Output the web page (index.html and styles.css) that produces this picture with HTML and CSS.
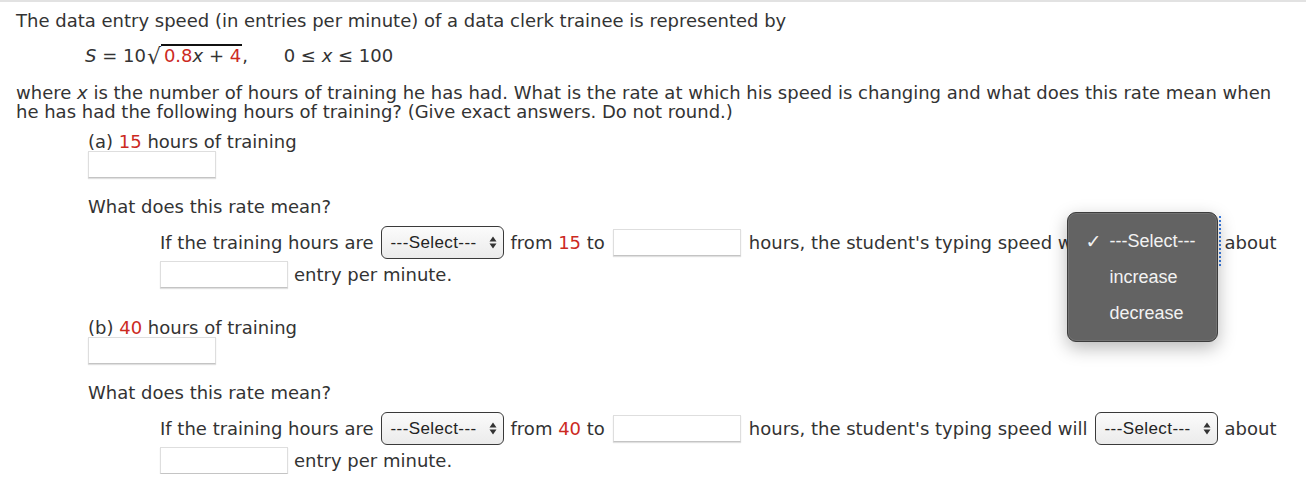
FILE: index.html
```html
<!DOCTYPE html>
<html>
<head>
<meta charset="utf-8">
<link rel="stylesheet" href="styles.css">
</head>
<body>
<div class="topbar"></div>
<div class="content">
  <p class="intro">The data entry speed (in entries per minute) of a data clerk trainee is represented by</p>
  <div class="formula">
    <span class="var">S</span> = 10<span class="radical">√</span><span class="radicand"><span class="red">0.8</span><span class="var">x</span> + <span class="red">4</span></span>,
    <span class="domain">0 ≤ <span class="var">x</span> ≤ 100</span>
  </div>
  <p class="para">where <span class="var">x</span> is the number of hours of training he has had. What is the rate at which his speed is changing and what does this rate mean when he has had the following hours of training? (Give exact answers. Do not round.)</p>

  <div class="part">
    <div class="part-title">(a) <span class="red">15</span> hours of training</div>
    <input class="box" type="text">
    <div class="question">What does this rate mean?</div>
    <div class="answer">
      <div class="row">
        <span>If the training hours are</span>
        <span class="select"><span class="sel-text">---Select---</span><svg class="arrows" width="8" height="13" viewBox="0 0 8 13"><path d="M4 0.5 L7.5 5.5 H0.5 Z M4 12.5 L7.5 7.5 H0.5 Z" fill="#333"/></svg></span>
        <span>from <span class="red">15</span> to</span>
        <input class="box" type="text">
        <span>hours, the student's typing speed will</span>
        <span class="sel-wrap">
          <span class="select select-open"><span class="sel-text">---Select---</span><svg class="arrows" width="8" height="13" viewBox="0 0 8 13"><path d="M4 0.5 L7.5 5.5 H0.5 Z M4 12.5 L7.5 7.5 H0.5 Z" fill="#333"/></svg></span>
          <span class="focus-ring"></span>
          <div class="menu">
            <div class="menu-item"><span class="check">✓</span>---Select---</div>
            <div class="menu-item">increase</div>
            <div class="menu-item">decrease</div>
          </div>
        </span>
        <span>about</span>
      </div>
      <div class="row2">
        <input class="box" type="text">
        <span>entry per minute.</span>
      </div>
    </div>
  </div>

  <div class="part part-b">
    <div class="part-title">(b) <span class="red">40</span> hours of training</div>
    <input class="box" type="text">
    <div class="question">What does this rate mean?</div>
    <div class="answer">
      <div class="row">
        <span>If the training hours are</span>
        <span class="select"><span class="sel-text">---Select---</span><svg class="arrows" width="8" height="13" viewBox="0 0 8 13"><path d="M4 0.5 L7.5 5.5 H0.5 Z M4 12.5 L7.5 7.5 H0.5 Z" fill="#333"/></svg></span>
        <span>from <span class="red">40</span> to</span>
        <input class="box" type="text">
        <span>hours, the student's typing speed will</span>
        <span class="select"><span class="sel-text">---Select---</span><svg class="arrows" width="8" height="13" viewBox="0 0 8 13"><path d="M4 0.5 L7.5 5.5 H0.5 Z M4 12.5 L7.5 7.5 H0.5 Z" fill="#333"/></svg></span>
        <span>about</span>
      </div>
      <div class="row2">
        <input class="box" type="text">
        <span>entry per minute.</span>
      </div>
    </div>
  </div>
</div>
</body>
</html>
```

FILE: styles.css
```css
html, body {
  margin: 0;
  padding: 0;
  background: #fff;
}
body {
  font-family: "DejaVu Sans", Verdana, sans-serif;
  font-size: 18px;
  line-height: 19px;
  color: #333;
}
.topbar {
  height: 2px;
  background: #e2e2e2;
}
.content {
  padding: 9px 16px 0 16px;
}
p {
  margin: 0;
}
.red {
  color: #cc2a1f;
}
.var {
  font-style: italic;
}
.intro {
  margin: 0;
}
.formula {
  margin-top: 14px;
  padding-left: 69px;
  line-height: 22px;
  height: 22px;
  white-space: nowrap;
}
.radical {
  display: inline-block;
  margin-left: 1px;
  font-size: 22px;
  line-height: 22px;
  vertical-align: -2px;
}
.radicand {
  display: inline-block;
  border-top: 2px solid #111;
  line-height: 19px;
  padding: 0 1px 0 3px;
}
.domain {
  margin-left: 30px;
}
.para {
  margin-top: 17px;
}
.part {
  margin-top: 11px;
  padding-left: 72px;
}
.part-b {
  margin-top: 30px;
}
.part-title {
  height: 19px;
}
.box {
  display: block;
  box-sizing: border-box;
  width: 128px;
  height: 27px;
  margin: 0;
  border: 1px solid #dedede;
  border-bottom-color: #c4c4c4;
  box-shadow: 0 1px 1px rgba(0, 0, 0, 0.12);
  background: #fff;
  padding: 0;
  font: inherit;
}
.question {
  margin-top: 19px;
  height: 19px;
}
.answer {
  margin-top: 8px;
  padding-left: 72px;
}
.row {
  display: flex;
  align-items: center;
  height: 36px;
  gap: 7px;
  white-space: nowrap;
}
.row .box {
  margin: 0 1px;
}
.row2 {
  display: flex;
  align-items: center;
  gap: 6px;
  height: 28px;
}
.select {
  display: inline-flex;
  align-items: center;
  justify-content: space-between;
  box-sizing: border-box;
  width: 123px;
  height: 33px;
  padding: 0 6px 0 9px;
  border: 1.5px solid #3a3a3a;
  border-radius: 6px;
  background: linear-gradient(#fbfbfb, #ebebeb);
  font-family: "Liberation Sans", Arial, sans-serif;
  font-size: 17px;
  letter-spacing: 0.4px;
  color: #222;
}
.select-open .sel-text {
  visibility: hidden;
}
.sel-wrap {
  position: relative;
  display: inline-flex;
}
.focus-ring {
  position: absolute;
  right: -3px;
  top: -10px;
  height: 50px;
  border-right: 2px dotted #3a7be0;
}
.menu {
  position: absolute;
  left: -28px;
  top: -14px;
  width: 151px;
  height: 130px;
  box-sizing: border-box;
  padding-top: 14px;
  background: #636363;
  border: 1px solid #3d3d3d;
  border-radius: 9px;
  box-shadow: inset 0 0 0 1px #727272, 0 6px 18px rgba(0, 0, 0, 0.28);
  font-family: "Liberation Sans", Arial, sans-serif;
  font-size: 18px;
  color: #f2f2f2;
  z-index: 5;
}
.menu-item {
  height: 36px;
  line-height: 29px;
  padding-left: 42px;
  position: relative;
}
.check {
  position: absolute;
  left: 18px;
  top: 0;
  font-family: "DejaVu Sans", sans-serif;
  font-size: 19px;
}
```
